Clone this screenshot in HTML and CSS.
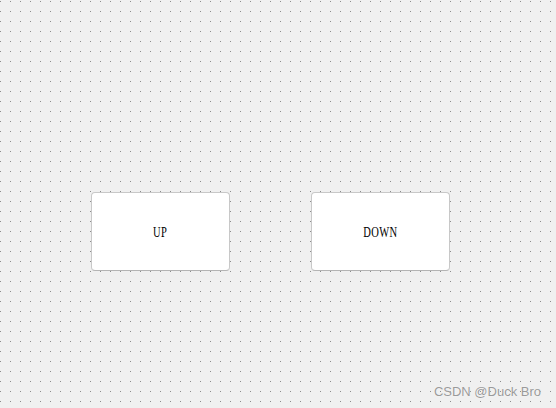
FILE: index.html
```html
<!DOCTYPE html>
<html>
<head>
<meta charset="utf-8">
<link rel="stylesheet" href="styles.css">
</head>
<body>
<div class="canvas">
  <div class="buttons">
    <button class="btn"><span class="label">UP</span></button>
    <button class="btn"><span class="label">DOWN</span></button>
  </div>
  <div class="watermark">CSDN @Duck Bro</div>
</div>
</body>
</html>
```

FILE: styles.css
```css
html, body {
  margin: 0;
  padding: 0;
}
body {
  width: 556px;
  height: 408px;
  overflow: hidden;
  background: #f0f0f0;
}
.canvas {
  position: relative;
  width: 556px;
  height: 408px;
  background-color: #f0f0f0;
  background-image:
    linear-gradient(to bottom, transparent 1px, #f0f0f0 1px),
    linear-gradient(to right, #8c8c8c 1px, transparent 1px);
  background-size: 10px 10px, 10px 10px;
  background-position: 0 1px, 0 0;
  box-sizing: border-box;
  padding: 192px 0 0 91px;
}
.buttons {
  display: flex;
  gap: 81px;
}
.btn {
  width: 139px;
  height: 79px;
  margin: 0;
  padding: 2px 0 0 0;
  background: #ffffff;
  border: 1px solid #c8c8c8;
  border-bottom-color: #b4b4b4;
  border-radius: 4px;
  font-family: "Liberation Serif", "Times New Roman", serif;
  font-size: 15px;
  color: #000;
}
.label {
  display: inline-block;
  transform: scaleX(0.7);
  letter-spacing: 0.5px;
}
.watermark {
  position: absolute;
  right: 15px;
  bottom: 9px;
  font-family: "Liberation Sans", Arial, sans-serif;
  font-size: 13px;
  color: #9a9a9a;
  text-shadow: 0 0 1px #fff;
}
```
